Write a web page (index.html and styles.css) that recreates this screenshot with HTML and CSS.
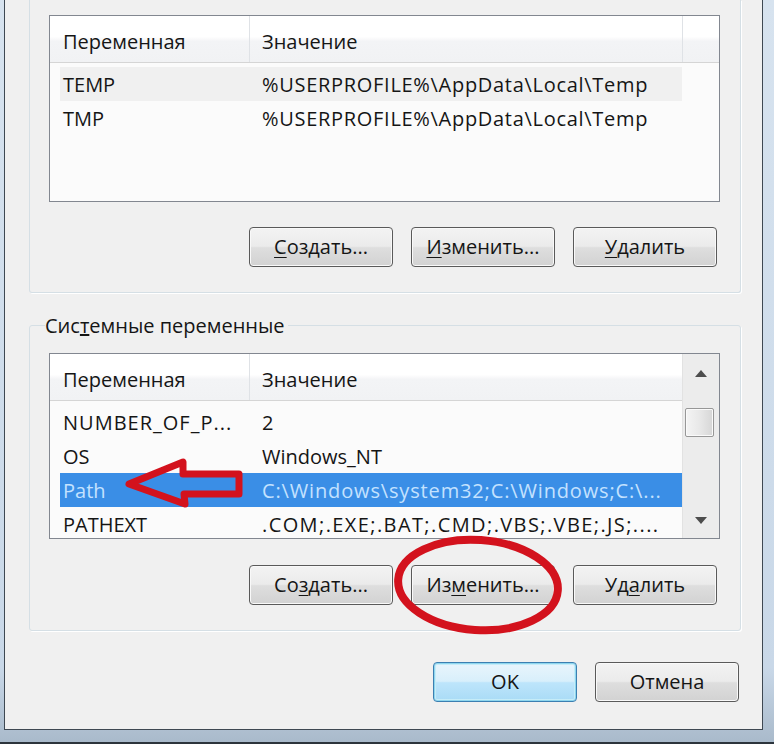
FILE: index.html
```html
<!DOCTYPE html>
<html lang="ru">
<head>
<meta charset="utf-8">
<title>Переменные среды</title>
<link rel="stylesheet" href="styles.css">
</head>
<body>
<div class="window">
  <div class="dialog">
    <div class="group group-user">
      <div class="list">
        <div class="list-main">
          <div class="list-header">
            <div class="hcol hcol-name">Переменная</div>
            <div class="hcol hcol-value">Значение</div>
            <div class="hcol hcol-rest"></div>
          </div>
          <div class="rows">
            <div class="row row-hot"><span class="cell cell-name">TEMP</span><span class="cell cell-value sp-temp">%USERPROFILE%\AppData\Local\Temp</span></div>
            <div class="row"><span class="cell cell-name">TMP</span><span class="cell cell-value sp-temp">%USERPROFILE%\AppData\Local\Temp</span></div>
          </div>
        </div>
      </div>
      <div class="btn-row">
        <button class="btn"><u>С</u>оздать...</button>
        <button class="btn"><u>И</u>зменить...</button>
        <button class="btn"><u>У</u>далить</button>
      </div>
    </div>

    <fieldset class="group group-sys">
      <legend class="legend">Сис<u>т</u>емные переменные</legend>
      <div class="list">
        <div class="list-main">
          <div class="list-header">
            <div class="hcol hcol-name">Переменная</div>
            <div class="hcol hcol-value">Значение</div>
          </div>
          <div class="rows">
            <div class="row"><span class="cell cell-name sp-num">NUMBER_OF_P...</span><span class="cell cell-value">2</span></div>
            <div class="row"><span class="cell cell-name">OS</span><span class="cell cell-value">Windows_NT</span></div>
            <div class="row row-sel"><span class="cell cell-name">Path</span><span class="cell cell-value sp-path">C:\Windows\system32;C:\Windows;C:\...</span></div>
            <div class="row"><span class="cell cell-name">PATHEXT</span><span class="cell cell-value sp-ext">.COM;.EXE;.BAT;.CMD;.VBS;.VBE;.JS;....</span></div>
          </div>
        </div>
        <div class="scrollbar">
          <div class="sb-btn sb-up"><svg width="12" height="7" viewBox="0 0 12 7"><path d="M0 7 L6 0 L12 7 Z" fill="#4d4d4d"/></svg></div>
          <div class="sb-track"><div class="sb-thumb"></div></div>
          <div class="sb-btn sb-down"><svg width="12" height="7" viewBox="0 0 12 7"><path d="M0 0 L12 0 L6 7 Z" fill="#4d4d4d"/></svg></div>
        </div>
      </div>
      <div class="btn-row">
        <button class="btn">Со<u>з</u>дать...</button>
        <button class="btn">Из<u>м</u>енить...</button>
        <button class="btn">Уд<u>а</u>лить</button>
      </div>
    </fieldset>

    <div class="btn-row dialog-buttons">
      <button class="btn btn-default">OK</button>
      <button class="btn">Отмена</button>
    </div>
  </div>

  <svg class="marks" width="774" height="744" viewBox="0 0 774 744">
    <path d="M129 484 L183 462 L183 474 L239 474 L239 494 L184 494 L185 504 Z" fill="none" stroke="#d3121d" stroke-width="7" stroke-linejoin="round"/>
    <ellipse cx="478" cy="585" rx="80" ry="45" transform="rotate(4 478 585)" fill="none" stroke="#d3121d" stroke-width="8"/>
  </svg>
</div>
</body>
</html>
```

FILE: styles.css
```css
* {
  box-sizing: border-box;
}

html,
body {
  margin: 0;
  padding: 0;
}

body {
  width: 774px;
  height: 744px;
  overflow: hidden;
  background: #c8d7e7;
  font-family: "Open Sans", "Noto Sans", "DejaVu Sans", sans-serif;
  font-size: 20px;
  color: #151515;
}

.window {
  position: relative;
  width: 774px;
  height: 744px;
  padding: 0 11px 12px 4px;
  border-bottom: 2px solid #2c343c;
  background: linear-gradient(to bottom, #d7e3ef 0%, #c9d8e8 90%, #a9bacb 100%);
}

.dialog {
  height: 100%;
  background: #f0f0f0;
  border: 1px solid #3e4852;
  border-top: none;
  padding: 0 21px 0 24px;
  display: flex;
  flex-direction: column;
}

.group {
  border: 1px solid #d5dfe5;
  border-radius: 3px;
  box-shadow: 1px 1px 0 #ffffff;
}

.group-user {
  height: 293px;
  border-top: none;
  border-radius: 0 0 3px 3px;
  padding: 15px 20px 0 19px;
}

.group-sys {
  margin: 17px 0 0;
  padding: 13px 20px 25px 19px;
  min-inline-size: 0;
}

.legend {
  margin-left: -4px;
  padding: 2px 3px 0 0;
  line-height: 28px;
  color: #151515;
}

.list {
  display: flex;
  height: 187px;
  border: 1px solid #828790;
  background: #fbfbfb;
  overflow: hidden;
}

.group-sys .list {
  height: 186px;
}

.list-main {
  flex: 1;
  min-width: 0;
}

.list-header {
  display: flex;
  height: 47px;
  border-bottom: 1px solid #d5d5d5;
  background: linear-gradient(to bottom, #ffffff 0%, #ffffff 45%, #f3f4f6 55%, #f1f2f4 100%);
}

.hcol {
  padding-top: 11px;
  line-height: 30px;
  white-space: nowrap;
}

.hcol-name {
  width: 199px;
  padding-left: 13px;
}

.hcol-value {
  width: 433px;
  padding-left: 12px;
  border-left: 1px solid #dfe2e6;
}

.hcol-rest {
  flex: 1;
  border-left: 1px solid #dfe2e6;
}

.rows {
  padding: 4px 0 0 10px;
}

.row {
  display: flex;
  width: 622px;
  height: 34px;
  align-items: center;
  white-space: nowrap;
}

.row-hot {
  background: #f0f0f0;
}

.row-sel {
  background: #3a8ee6;
  color: #c4e2ff;
}

.cell-name {
  width: 189px;
  padding-left: 3px;
  overflow: hidden;
}

.cell-value {
  padding-left: 13px;
}

.sp-temp {
  letter-spacing: 0.7px;
}

.sp-path {
  letter-spacing: 0.85px;
}

.sp-ext {
  letter-spacing: 1.4px;
}

.sp-num {
  letter-spacing: 1px;
}

.scrollbar {
  width: 37px;
  display: flex;
  flex-direction: column;
  background: #ececec;
  border-left: 1px solid #e2e2e2;
}

.sb-btn {
  display: flex;
  align-items: center;
  justify-content: center;
}

.sb-up {
  height: 38px;
}

.sb-down {
  height: 36px;
}

.sb-track {
  flex: 1;
  padding: 16px 0 0 2px;
}

.sb-thumb {
  width: 29px;
  height: 29px;
  border: 1px solid #979797;
  border-radius: 2px;
  background: linear-gradient(to right, #f4f4f4 0%, #e8e8e8 50%, #d6d6d6 100%);
  box-shadow: inset 0 0 0 1px #fafafa;
}

.btn-row {
  display: flex;
  justify-content: flex-end;
  gap: 18px;
  padding-right: 3px;
  margin-top: 25px;
}

.group-sys .btn-row {
  margin-top: 26px;
}

.btn {
  width: 144px;
  height: 40px;
  margin: 0;
  padding: 0;
  border: 1px solid #5a5a5a;
  border-radius: 4px;
  background: linear-gradient(to bottom, #f3f3f3 0%, #ebebeb 48%, #dedede 52%, #d2d2d2 100%);
  box-shadow: inset 0 0 0 1px #f9f9f9;
  font: inherit;
  line-height: 36px;
  color: #151515;
}

.btn u {
  text-decoration-thickness: 1px;
  text-underline-offset: 3px;
}

.dialog-buttons {
  margin-top: 31px;
  padding-right: 2px;
}

.btn-default {
  border-color: #3c7fb1;
  background: linear-gradient(to bottom, #e9f5fc 0%, #d8effb 48%, #bde5fb 52%, #a9dbf6 100%);
  box-shadow: inset 0 0 0 1px #8ed6ee, inset 0 0 0 2px #c6ecf8;
}

.marks {
  position: absolute;
  left: 0;
  top: 0;
  pointer-events: none;
}
```
